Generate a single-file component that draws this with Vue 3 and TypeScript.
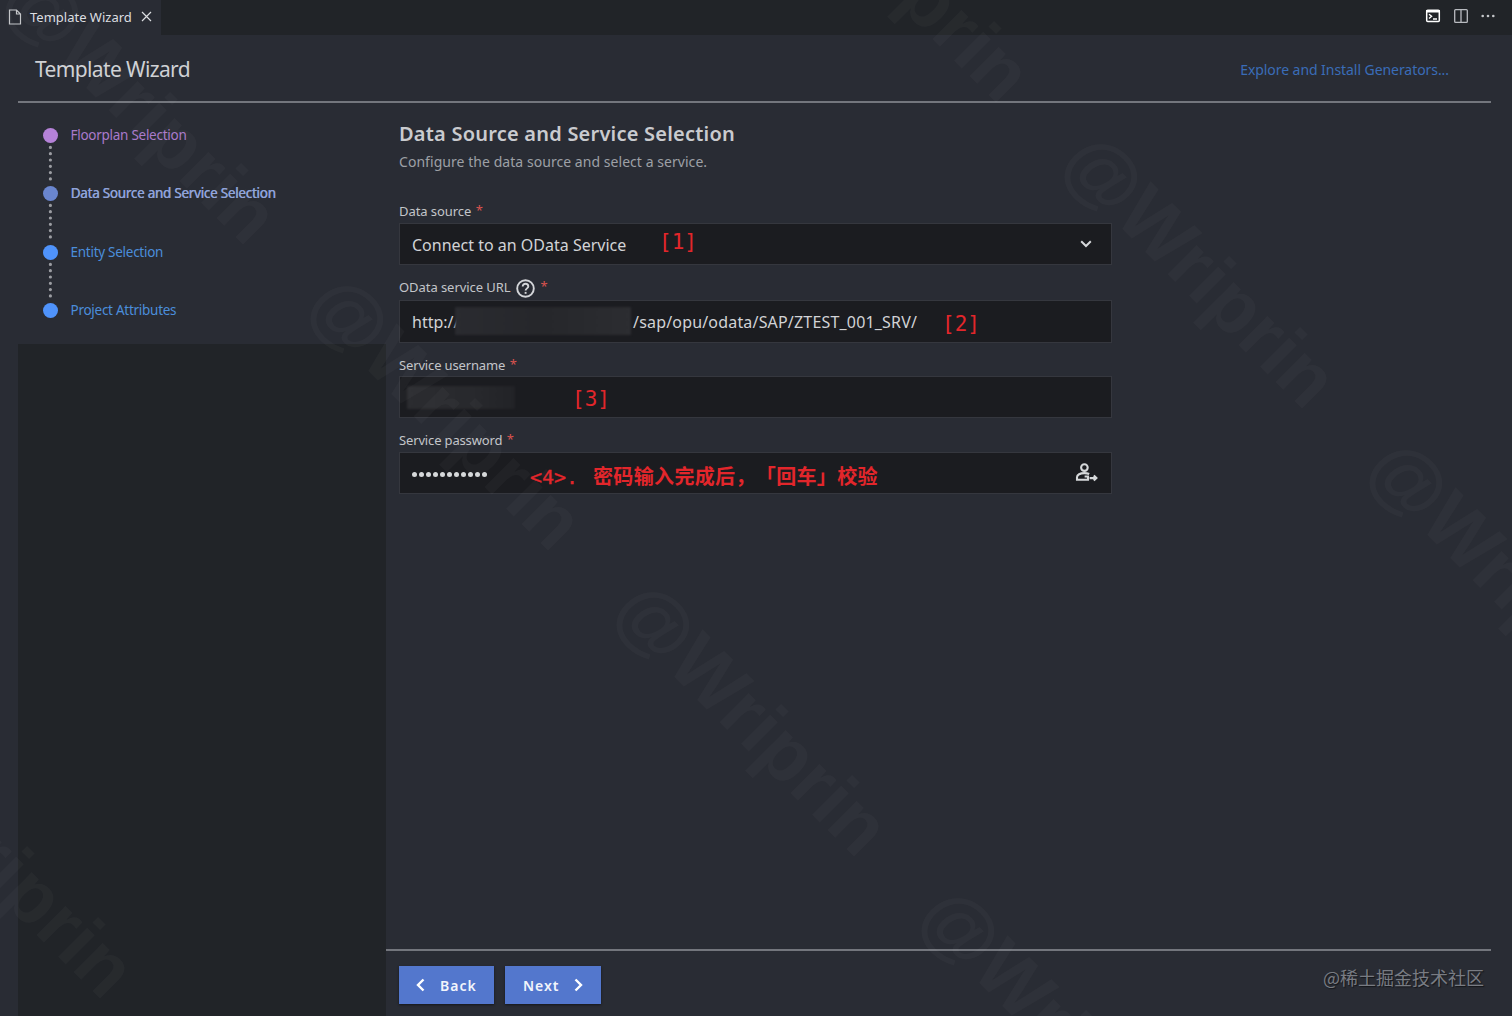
<script setup lang="ts">
interface Step { label: string; state: 'done' | 'active' | 'todo' }
interface Mark { x: number; y: number }

const steps: Step[] = [
  { label: 'Floorplan Selection', state: 'done' },
  { label: 'Data Source and Service Selection', state: 'active' },
  { label: 'Entity Selection', state: 'todo' },
  { label: 'Project Attributes', state: 'todo' },
]

const marks: Mark[] = [
  { x: 42, y: 14 },
  { x: 347, y: 320 },
  { x: 653, y: 626 },
  { x: 958, y: 932 },
  { x: 795, y: -128 },
  { x: 1101, y: 178 },
  { x: 1406, y: 484 },
  { x: -101, y: 768 },
]
</script>

<template>
  <div class="window">
    <header class="tabbar">
      <div class="tab">
        <svg class="file" width="14" height="16" viewBox="0 0 14 16"><path d="M1.5 1h7l4 4v10h-11zM8.5 1v4h4" /></svg>
        <span class="tab-name">Template Wizard</span>
        <svg class="close" width="11" height="11" viewBox="0 0 11 11"><path d="M1 1l9 9M10 1l-9 9" /></svg>
      </div>
      <div class="actions">
        <svg width="16" height="14" viewBox="0 0 16 14"><rect x="1.7" y="1.2" width="12.6" height="11.4" rx="1" fill="none" stroke="#fff" stroke-width="1.5" /><path d="M1 1h14v2.5H1z" fill="#fff" /><path d="M4 5.2l2.6 2.1L4 9.6M8 10h4" fill="none" stroke="#fff" stroke-width="1.4" /></svg>
        <svg width="14" height="14" viewBox="0 0 14 14"><path d="M1.6.7h10.8q.9 0 .9.9v10.8q0 .9-.9.9H1.6q-.9 0-.9-.9V1.6q0-.9.9-.9zM7 .7v12.6" fill="none" stroke="#b9bbc0" stroke-width="1.3" /></svg>
        <svg width="14" height="4" viewBox="0 0 14 4"><g fill="#c5c7ca"><circle cx="1.7" cy="2" r="1.3" /><circle cx="7" cy="2" r="1.3" /><circle cx="12.3" cy="2" r="1.3" /></g></svg>
      </div>
    </header>

    <div class="title-row">
      <h1>Template Wizard</h1>
      <a class="explore">Explore and Install Generators...</a>
    </div>

    <div class="body">
      <aside>
        <ul class="steps">
          <li v-for="s in steps" :key="s.label" :class="s.state">
            <span class="rail"><i class="dot"></i><svg class="dots" width="5" height="36" viewBox="0 0 5 36"><path d="M2.4 2.4V35" /></svg></span>
            <span class="step-label">{{ s.label }}</span>
          </li>
        </ul>
        <div class="side-fill"></div>
      </aside>

      <main>
        <section class="form">
          <h2>Data Source and Service Selection</h2>
          <p class="desc">Configure the data source and select a service.</p>

          <label class="l1"><span>Data source</span><b>*</b></label>
          <div class="field f1">
            <span class="value v1">Connect to an OData Service</span>
            <span class="note n1">[1]</span>
            <svg class="chev" width="12" height="8" viewBox="0 0 12 8"><path d="M1.2 1.3L6 6l4.8-4.7" /></svg>
          </div>

          <label class="l2"><span>OData service URL</span>
            <svg class="help" width="19" height="19" viewBox="0 0 19 19"><circle cx="9.5" cy="9.5" r="8.3" /><path d="M6.7 7.5c0-1.6 1.2-2.7 2.8-2.7s2.8 1.1 2.8 2.6c0 1.9-2.7 2.1-2.7 4.2" /><path d="M9.6 12.9v1.9" /></svg>
            <b>*</b></label>
          <div class="field f2">
            <span class="value v2">http://</span>
            <span class="redacted url"></span>
            <span class="value v3">/sap/opu/odata/SAP/ZTEST_001_SRV/</span>
            <span class="note n2">[2]</span>
          </div>

          <label class="l3"><span>Service username</span><b>*</b></label>
          <div class="field f3">
            <span class="redacted user"></span>
            <span class="note n3">[3]</span>
          </div>

          <label class="l4"><span>Service password</span><b>*</b></label>
          <div class="field f4">
            <span class="bullets"><i v-for="n in 11" :key="n"></i></span>
            <span class="note n4"><span class="num">&lt;4&gt;.</span><span class="cn">密码输入完成后，「回车」校验</span></span>
            <svg class="login" width="23" height="19" viewBox="0 0 23 19"><circle cx="9.4" cy="4.6" r="3.3" /><path d="M14.2 11c-1.4-.6-3-.9-4.8-.9-4.4 0-7.4 1.7-7.4 4.1v2.6h11v-3.3H9.6" /><path d="M14.6 15.1h6.4M18.8 12.6l2.6 2.5-2.6 2.5" /></svg>
          </div>
        </section>

        <footer>
          <button class="back"><svg width="9" height="14" viewBox="0 0 9 14"><path d="M7.5 1.5L2 7l5.5 5.5" /></svg><span>Back</span></button>
          <button class="next"><span>Next</span><svg width="9" height="14" viewBox="0 0 9 14"><path d="M1.5 1.5L7 7l-5.5 5.5" /></svg></button>
          <span class="credit">@稀土掘金技术社区</span>
        </footer>
      </main>
    </div>

    <svg class="marks" width="1512" height="1016" viewBox="0 0 1512 1016">
      <text v-for="m in marks" :key="m.x" :transform="`translate(${m.x} ${m.y}) rotate(45)`" x="-39" y="21" textLength="349">@Wriprin</text>
    </svg>
  </div>
</template>

<style>
body { margin: 0; background: #292c34; }
</style>

<style scoped>
* { box-sizing: border-box; }
.window {
  position: relative; width: 1512px; height: 1016px; overflow: hidden;
  display: flex; flex-direction: column; background: #292c34; color: #cfd1d4;
  font-family: "Noto Sans", "Open Sans", "Noto Sans CJK SC", sans-serif;
}
span, h1, h2, p, a { white-space: nowrap; }
svg { flex: none; display: block; }
.tabbar { height: 35px; flex: none; background: #212428; display: flex; justify-content: space-between; }
.tab { width: 161px; height: 35px; background: #292c34; display: flex; align-items: center; padding: 0 0 2px 8px; }
.file { fill: none; stroke: #c4c6c9; stroke-width: 1.2; }
.tab-name { margin-left: 8px; width: 103px; font-size: 13px; letter-spacing: 0; color: #dcdee1; }
.close { margin-left: 8px; fill: none; stroke: #dcdee1; stroke-width: 1.2; }
.actions { display: flex; align-items: center; gap: 13px; padding: 0 17px 3px 0; }
.title-row {
  height: 68px; flex: none; margin: 0 21px 0 18px; padding: 2px 42px 0 17px; border-bottom: 2px solid #73767d;
  display: flex; align-items: center; justify-content: space-between;
}
h1 { margin: 0; font-size: 21px; font-weight: 400; letter-spacing: -.63px; line-height: 28px; }
.explore { font-size: 14px; color: #3a6cb8; letter-spacing: -.06px; }
.body { flex: 1; min-height: 0; display: flex; padding: 0 21px 0 18px; }
aside { width: 368px; flex: none; display: flex; flex-direction: column; }
.steps { list-style: none; margin: 0; padding: 25px 0 0 25px; height: 241px; }
.steps li { height: 58.4px; display: flex; color: #4b8edb; }
.rail { width: 15px; display: flex; flex-direction: column; align-items: center; }
.dot { width: 15px; height: 15px; border-radius: 50%; background: #4f93fb; flex: none; }
.dots { margin-top: 2px; stroke: #9b9da2; stroke-width: 3.2; stroke-linecap: round; stroke-dasharray: 0 6.3; fill: none; }
li:last-child .dots { display: none; }
.step-label { margin-left: 12.5px; margin-top: -1px; font-size: 13.5px; line-height: 17px; letter-spacing: -.27px; }
.done { color: #a97acb !important; }
.done .dot { background: #b582d8; }
.active { color: #8fa3d9 !important; }
.active .dot { background: #6a86cf; }
.active .step-label { text-shadow: .4px 0 0 #8fa3d9; }
.side-fill { flex: 1; background: #212428; }
main { flex: 1; min-width: 0; display: flex; flex-direction: column; }
.form { flex: 1; padding-left: 13px; display: flex; flex-direction: column; align-items: flex-start; }
h2 { margin: 16.5px 0 0; font-size: 20px; line-height: 28px; font-weight: 600; color: #c9cbcf; letter-spacing: .22px; }
.desc { margin: 4px 0 0; font-size: 14px; line-height: 20px; color: #9da0a6; letter-spacing: .05px; }
label { display: flex; align-items: center; font-size: 13px; height: 20px; color: #c3c5c9; letter-spacing: -.06px; }
label b { font-weight: 400; color: #d9534f; margin-left: 4.5px; line-height: 16px; height: 18px; }
.l1 { margin-top: 29.5px; }
.l2 { margin-top: 12px; }
.l3 { margin-top: 12px; }
.l4 { margin-top: 12px; }
.l3 span, .l4 span { letter-spacing: -.15px; }
.l3 span { margin-top: -1px; }
.help { margin: 3px 0 0 5px; fill: none; stroke: #d3d5d8; stroke-width: 1.9; }
.l2 b { margin-left: 6px; }
.field {
  width: 713px; height: 42px; background: #1b1c20; border: 1px solid #35373e; display: flex; align-items: center;
}
.f1 { margin-top: 2px; }
.f2 { margin-top: 3px; height: 43px; }
.f3 { margin-top: 1px; }
.f4 { margin-top: 2px; }
.value { font-size: 16px; color: #d2d3d6; }
.v1 { margin-left: 12px; width: 247px; padding-top: 2px; }
.v2 { margin-left: 12px; width: 43px; padding-top: 1px; }
.v3 { width: 310px; margin-left: 2px; padding-top: 1px; letter-spacing: .18px; }
.note { font-family: "DejaVu Sans Mono", "Noto Sans CJK SC", monospace; font-size: 21px; line-height: 24px; color: #e3262b; }
.n1 { width: 412px; margin-top: -4px; }
.chev { margin-left: 9px; fill: none; stroke: #d6d8db; stroke-width: 2; }
.redacted { background: #2a2b2f; filter: blur(.8px); position: relative; }
.redacted.url { width: 176px; height: 28px; margin-top: -2px; background: linear-gradient(90deg, #2a2b30, #26272b 50%, #2c2d31); }
.redacted.user { width: 108px; height: 23px; margin: 0 0 0 7px; background: linear-gradient(90deg, #2b2c30, #28292d 60%, #222327); }
.n2 { margin: 4px 0 0 -1px; }
.n3 { margin: 3px 0 0 57px; }
.bullets { display: flex; gap: 2px; margin-left: 12px; width: 118px; margin-top: 2px; }
.bullets i { width: 5px; height: 5px; border-radius: 50%; background: #d6d8da; }
.n4 { display: flex; width: 545px; margin-top: 8px; font-size: 20px; }
.num { width: 63px; -webkit-text-stroke: .3px #e3262b; }
.cn {
  font-weight: 700; font-size: 20px; letter-spacing: .35px; font-family: "Noto Sans CJK SC", sans-serif;
  font-kerning: none; text-spacing-trim: space-all; margin-top: -1px;
}
.login { fill: none; stroke: #d6d8da; stroke-width: 2.1; margin-top: -1px; }
footer { height: 67px; flex: none; border-top: 2px solid #73767d; padding-left: 13px; display: flex; align-items: center; gap: 11px; }
button {
  width: 95px; height: 38px; margin-top: 3px; padding: 0; border: 0; background: #5377cd; color: #f2f5fb;
  display: flex; align-items: center; font: 600 14px "Noto Sans", sans-serif; letter-spacing: 1px; box-shadow: 0 1px 2px #15171b;
}
button svg { fill: none; stroke: #fff; stroke-width: 2.4; margin-bottom: 1px; }
.back { padding-left: 17px; gap: 15px; }
.next { width: 96px; padding-left: 18px; gap: 14px; }
.credit {
  margin-left: auto; margin-right: 7px; padding-bottom: 13px; font: 400 18px "Noto Sans CJK SC", sans-serif; line-height: 24px;
  color: #797c83; text-shadow: 1px 1px 1px #14161a;
}
.marks { position: absolute; left: 0; top: 0; pointer-events: none; }
.marks text { font: 700 78px "Liberation Sans", sans-serif; fill: rgba(255, 255, 255, .026); }
</style>
